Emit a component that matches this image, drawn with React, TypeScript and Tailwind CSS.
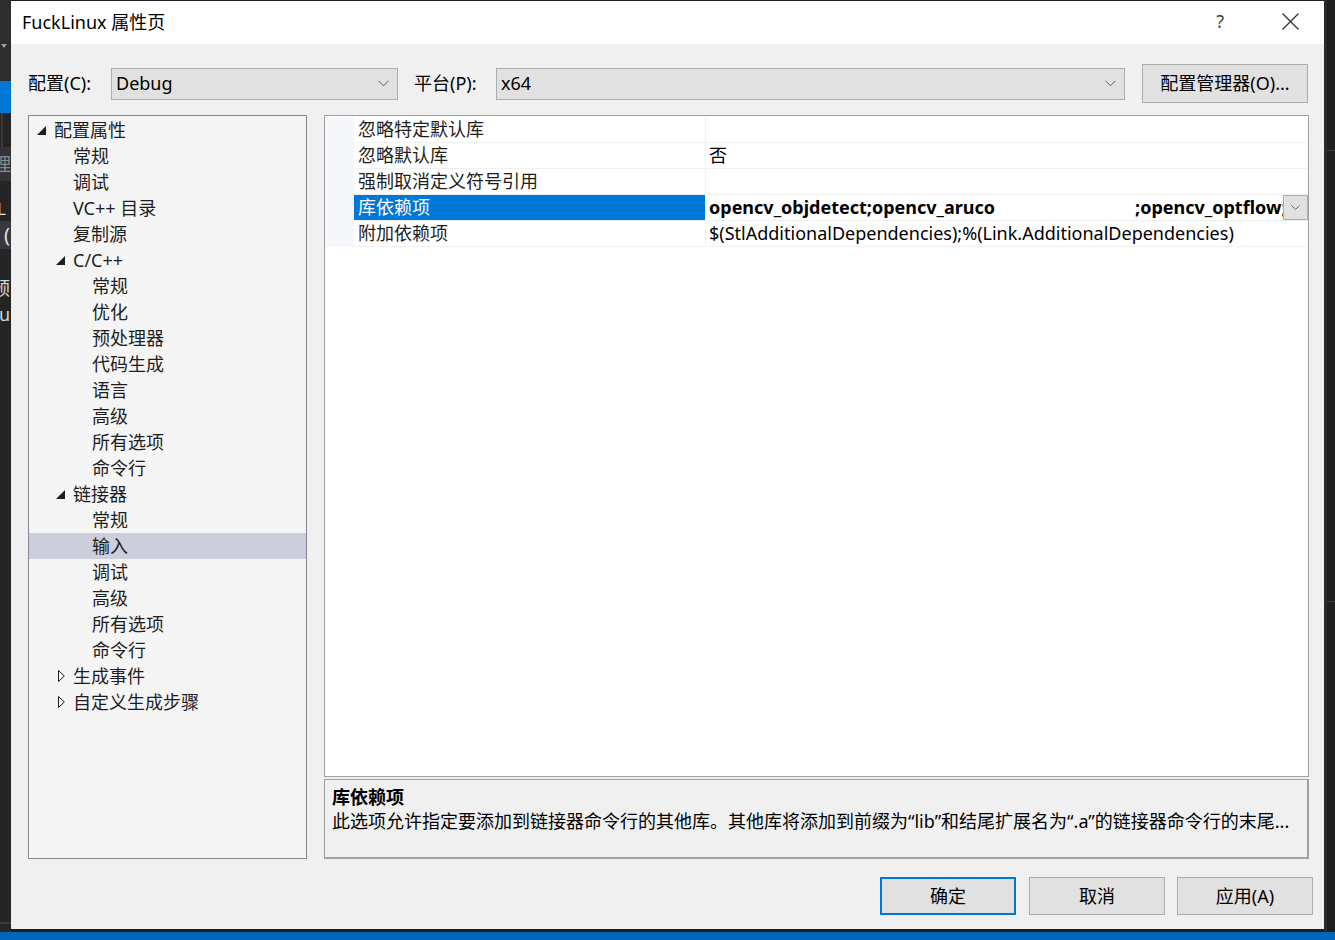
import React from "react";

const FONT = '"Noto Sans", "Noto Sans CJK SC", sans-serif';

type TreeItem = { label: string; level: number; kind: "open" | "closed" | "leaf"; selected?: boolean };

const tree: TreeItem[] = [
  { label: "配置属性", level: 0, kind: "open" },
  { label: "常规", level: 1, kind: "leaf" },
  { label: "调试", level: 1, kind: "leaf" },
  { label: "VC++ 目录", level: 1, kind: "leaf" },
  { label: "复制源", level: 1, kind: "leaf" },
  { label: "C/C++", level: 1, kind: "open" },
  { label: "常规", level: 2, kind: "leaf" },
  { label: "优化", level: 2, kind: "leaf" },
  { label: "预处理器", level: 2, kind: "leaf" },
  { label: "代码生成", level: 2, kind: "leaf" },
  { label: "语言", level: 2, kind: "leaf" },
  { label: "高级", level: 2, kind: "leaf" },
  { label: "所有选项", level: 2, kind: "leaf" },
  { label: "命令行", level: 2, kind: "leaf" },
  { label: "链接器", level: 1, kind: "open" },
  { label: "常规", level: 2, kind: "leaf" },
  { label: "输入", level: 2, kind: "leaf", selected: true },
  { label: "调试", level: 2, kind: "leaf" },
  { label: "高级", level: 2, kind: "leaf" },
  { label: "所有选项", level: 2, kind: "leaf" },
  { label: "命令行", level: 2, kind: "leaf" },
  { label: "生成事件", level: 1, kind: "closed" },
  { label: "自定义生成步骤", level: 1, kind: "closed" },
];

const padFor = ["pl-[6px]", "pl-[25px]", "pl-[44px]"];

function Chevron() {
  return (
    <svg width="11" height="7" viewBox="0 0 11 7">
      <polyline points="0.5,0.8 5.5,5.8 10.5,0.8" fill="none" stroke="#606060" strokeWidth="1" />
    </svg>
  );
}

function TreeRow({ item }: { item: TreeItem }) {
  return (
    <div
      className={`h-[26px] flex items-center ${padFor[item.level]} ${item.selected ? "bg-[#cccedb]" : ""}`}
    >
      <div className="w-[19px] h-[26px] flex items-center shrink-0">
        {item.kind === "open" && (
          <svg width="9" height="9" viewBox="0 0 9 9" className="mt-[1px] ml-[2px]">
            <polygon points="9,0 9,9 0,9" fill="#1e1e1e" />
          </svg>
        )}
        {item.kind === "closed" && (
          <svg width="7" height="12" viewBox="0 0 7 12" className="ml-[4px]">
            <polygon points="0.5,0.5 6.3,6 0.5,11.5" fill="none" stroke="#1e1e1e" strokeWidth="1" />
          </svg>
        )}
      </div>
      <span className="text-[18px] leading-[26px] text-[#1e1e1e] whitespace-nowrap">{item.label}</span>
    </div>
  );
}

type PropRow = { name: string; value: React.ReactNode; selected?: boolean };

const props: PropRow[] = [
  { name: "忽略特定默认库", value: "" },
  { name: "忽略默认库", value: "否" },
  { name: "强制取消定义符号引用", value: "" },
  {
    name: "库依赖项",
    selected: true,
    value: (
      <span className="font-bold whitespace-nowrap">
        opencv_objdetect;opencv_aruco<span className="inline-block w-[140px]"></span>;opencv_optflow;opencv_video
      </span>
    ),
  },
  { name: "附加依赖项", value: "$(StlAdditionalDependencies);%(Link.AdditionalDependencies)" },
];

function LeftStrip() {
  return (
    <div className="w-[11px] shrink-0 h-full flex flex-col bg-[#252526] overflow-hidden text-[18px] leading-none">
      <div className="h-[81px] bg-[#2d2d30] flex items-start pt-[44px] pl-[1px]">
        <svg width="6" height="4" viewBox="0 0 6 4">
          <polygon points="0,0 6,0 3,4" fill="#9d9d9d" />
        </svg>
      </div>
      <div className="h-[32px] bg-[#0078d4]"></div>
      <div className="h-[34px] bg-[#252526] flex">
        <div className="w-[2px] h-full bg-[#3a3a3a] ml-[1px]"></div>
      </div>
      <div className="h-[34px] bg-[#333337] flex items-center overflow-hidden">
        <span className="-ml-[7px] text-[#8c8c8c] text-[18px]">理</span>
      </div>
      <div className="h-[14px]"></div>
      <div className="h-[26px] flex items-center overflow-hidden">
        <span className="-ml-[3px] text-[#e0e0e0] text-[17px]">L</span>
      </div>
      <div className="h-[28px] bg-[#37373d] flex items-center overflow-hidden">
        <span className="ml-[4px] text-[#e0e0e0] text-[20px]">(</span>
      </div>
      <div className="h-[26px]"></div>
      <div className="h-[26px] flex items-center overflow-hidden">
        <span className="-ml-[8px] text-[#d4d4d4] text-[18px]">预</span>
      </div>
      <div className="h-[26px] flex items-center overflow-hidden">
        <span className="-ml-[1px] text-[#d4d4d4] text-[18px]">u</span>
      </div>
      <div className="flex-1"></div>
      <div className="h-[2px] bg-[#3c3c3c] mb-[8px]"></div>
    </div>
  );
}

export default function App() {
  return (
    <div className="w-[1335px] h-[940px] bg-[#1e1e1e] flex flex-col overflow-hidden" style={{ fontFamily: FONT }}>
      <div className="h-[932px] flex">
        <LeftStrip />
        {/* Dialog */}
        <div className="w-[1313px] shrink-0 h-[929px] pt-[1px] flex flex-col">
          {/* Title bar */}
          <div className="h-[43px] bg-white flex items-center pl-[11px] pr-[25px]">
            <span className="text-[18px] text-black whitespace-nowrap">FuckLinux 属性页</span>
            <div className="flex-1"></div>
            <span className="text-[18px] text-[#444] mr-[58px] mt-[-2px]">?</span>
            <svg width="17" height="17" viewBox="0 0 17 17" className="mt-[-2px]">
              <line x1="0.5" y1="0.5" x2="16.5" y2="16.5" stroke="#333" strokeWidth="1.2" />
              <line x1="16.5" y1="0.5" x2="0.5" y2="16.5" stroke="#333" strokeWidth="1.2" />
            </svg>
          </div>
          {/* Body */}
          <div className="flex-1 bg-[#f0f0f0] flex flex-col pt-[20px]">
            {/* config row */}
            <div className="h-[39px] flex items-center pl-[17px]">
              <div className="w-[83px] shrink-0 text-[18px] text-black whitespace-nowrap">配置(C):</div>
              <div className="w-[287px] shrink-0 h-[32px] bg-[#e1e1e1] border border-[#adadad] flex items-center pl-[4px] pr-[8px]">
                <span className="text-[18px] text-black flex-1">Debug</span>
                <Chevron />
              </div>
              <div className="w-[82px] shrink-0 ml-[16px] text-[18px] text-black whitespace-nowrap">平台(P):</div>
              <div className="w-[629px] shrink-0 h-[32px] bg-[#e1e1e1] border border-[#adadad] flex items-center pl-[4px] pr-[8px]">
                <span className="text-[18px] text-black flex-1">x64</span>
                <Chevron />
              </div>
              <div className="w-[166px] shrink-0 h-[39px] ml-[17px] bg-[#e1e1e1] border border-[#adadad] flex items-center justify-center">
                <span className="text-[18px] text-black whitespace-nowrap">配置管理器(O)...</span>
              </div>
            </div>
            {/* main */}
            <div className="mt-[12px] h-[744px] flex pl-[17px]">
              {/* tree */}
              <div className="w-[279px] shrink-0 h-full border border-[#828790] bg-[#f5f5f5] pt-[1px] overflow-hidden">
                {tree.map((t, i) => (
                  <TreeRow key={i} item={t} />
                ))}
              </div>
              {/* right */}
              <div className="w-[985px] shrink-0 ml-[17px] flex flex-col">
                <div className="h-[662px] border border-[#a0a0a0] bg-white flex flex-col pt-[1px] overflow-hidden">
                  {props.map((p, i) => (
                    <div key={i} className="h-[26px] flex shrink-0">
                      <div className="w-[29px] shrink-0 h-full bg-[#f5f7fa]"></div>
                      <div className="flex-1 min-w-0 flex border-b border-[#f0f0f0]">
                        <div
                          className={`w-[352px] shrink-0 h-full flex items-center pl-[4px] border-r border-[#f0f0f0] ${
                            p.selected ? "bg-[#0078d7] text-white" : "text-[#1e1e1e]"
                          }`}
                        >
                          <span className="text-[18px] whitespace-nowrap">{p.name}</span>
                        </div>
                        <div className="flex-1 min-w-0 h-full flex items-center pl-[3px] overflow-hidden">
                          <div className="flex-1 min-w-0 overflow-hidden text-[18px] text-black whitespace-nowrap">{p.value}</div>
                          {p.selected && (
                            <div className="w-[25px] h-[25px] bg-[#e1e1e1] border border-[#adadad] flex items-center justify-center shrink-0">
                              <svg width="9" height="5" viewBox="0 0 9 5">
                                <polyline points="0.5,0.5 4.5,4.5 8.5,0.5" fill="none" stroke="#606060" strokeWidth="1" />
                              </svg>
                            </div>
                          )}
                        </div>
                      </div>
                    </div>
                  ))}
                </div>
                <div className="mt-[2px] h-[80px] border border-[#a0a0a0] border-b-2 border-r-2 bg-[#f0f0f0] px-[7px] pt-[4px] overflow-hidden">
                  <div className="text-[18px] leading-[26px] font-bold text-black">库依赖项</div>
                  <div className="text-[18px] leading-[22px] text-black whitespace-nowrap overflow-hidden">
                    此选项允许指定要添加到链接器命令行的其他库。其他库将添加到前缀为“lib”和结尾扩展名为“.a”的链接器命令行的末尾...
                  </div>
                </div>
              </div>
            </div>
            {/* buttons */}
            <div className="mt-[18px] h-[38px] flex justify-end pr-[11px]">
              <div className="w-[136px] h-[38px] bg-[#e1e1e1] border-2 border-[#0078d7] flex items-center justify-center">
                <span className="text-[18px] text-black">确定</span>
              </div>
              <div className="w-[136px] h-[38px] ml-[13px] bg-[#e1e1e1] border border-[#adadad] flex items-center justify-center">
                <span className="text-[18px] text-black">取消</span>
              </div>
              <div className="w-[136px] h-[38px] ml-[12px] bg-[#e1e1e1] border border-[#adadad] flex items-center justify-center">
                <span className="text-[18px] text-black">应用(A)</span>
              </div>
            </div>
          </div>
        </div>
        {/* right strip */}
        <div className="flex-1 flex">
          <div className="w-[3px] bg-[#2b2b2b]"></div>
          <div className="flex-1 bg-[#1e1e1e] flex flex-col">
            <div className="h-[150px]"></div>
            <div className="h-[1px] bg-[#3c3c3c]"></div>
            <div className="h-[450px]"></div>
            <div className="h-[1px] bg-[#3c3c3c]"></div>
            <div className="flex-1"></div>
          </div>
        </div>
      </div>
      <div className="flex-1 bg-[#0067b8]"></div>
    </div>
  );
}
